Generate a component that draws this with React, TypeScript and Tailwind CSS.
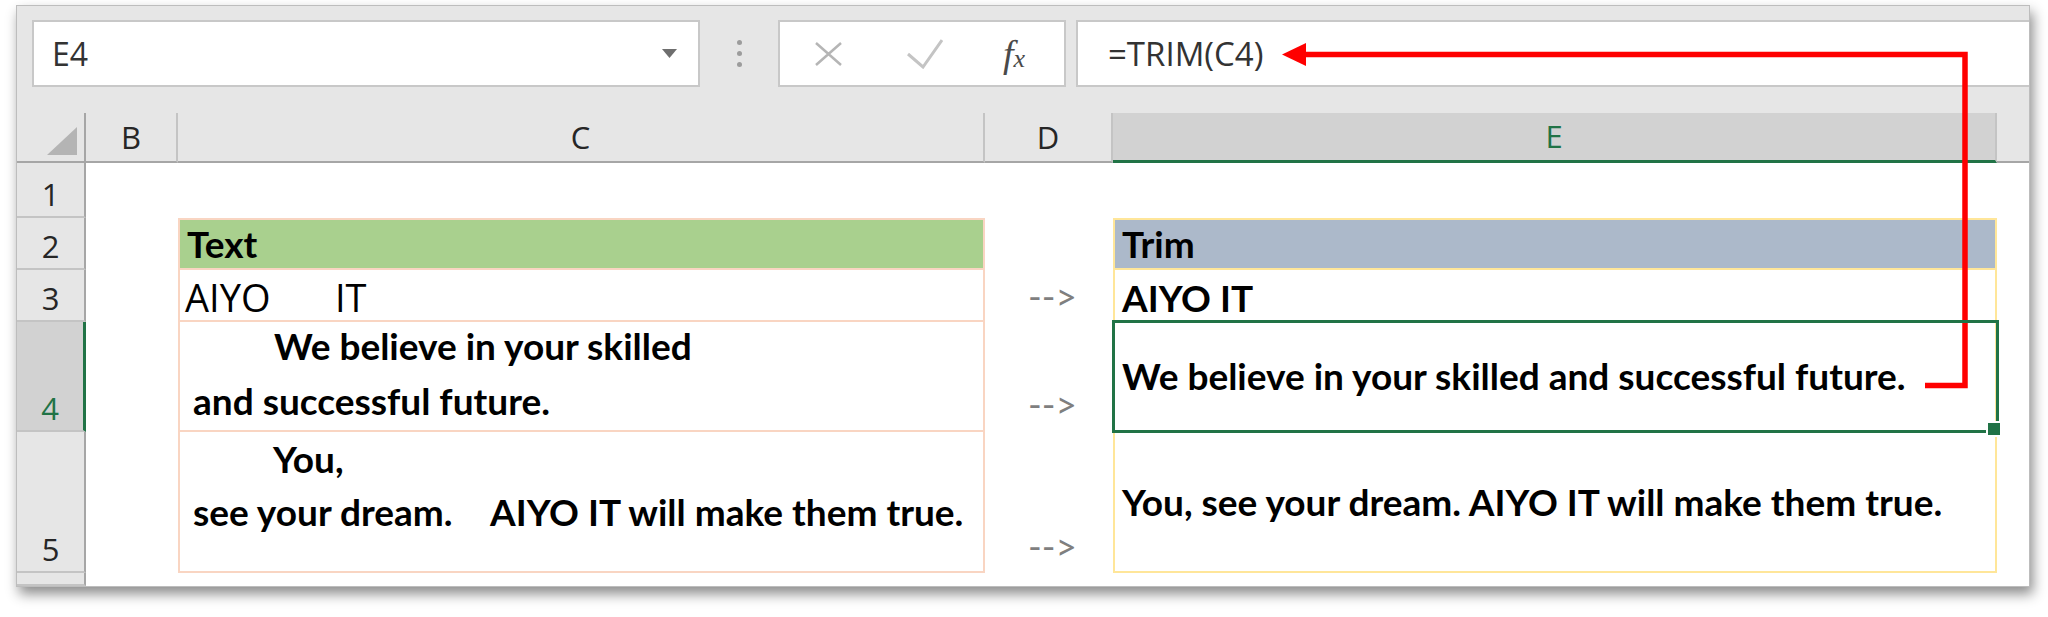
import React from "react";

// fonts
const ui = "font-['Open_Sans',sans-serif]";
const cell = "font-['Lato',sans-serif]";

const GREEN = "border-[#217346]";

function RowHead({ n, active = false }: { n?: string; active?: boolean }) {
  return (
    <div
      className={`flex items-end justify-center border-b-2 border-b-[#c4c4c4] pb-[6px] ${ui} text-[31px] leading-[31px] ${
        active
          ? "bg-[#d2d2d2] border-r-[3px] border-r-[#217346] text-[#217346]"
          : "bg-[#e6e6e6] border-r-2 border-r-[#a6a6a6] text-[#262626]"
      }`}
    >
      {n}
    </div>
  );
}

function ColHead({ label, active = false, last = false }: { label?: string; active?: boolean; last?: boolean }) {
  return (
    <div
      className={`flex items-center justify-center ${ui} text-[31px] leading-[31px] ${
        active
          ? "bg-[#d2d2d2] border-b-[3px] border-b-[#217346] text-[#217346] border-r-2 border-r-[#c4c4c4]"
          : `bg-[#e6e6e6] border-b-2 border-b-[#a6a6a6] text-[#262626] ${last ? "" : "border-r-2 border-r-[#c4c4c4]"}`
      }`}
    >
      {label}
    </div>
  );
}

function Arrow({ pb }: { pb: string }) {
  return (
    <div className={`flex items-end pl-[43px] ${pb} ${cell} text-[37px] leading-[44px] text-[#7f7f7f]`}>--&gt;</div>
  );
}

export default function App() {
  return (
    <div className="relative w-[2048px] h-[617px] bg-white overflow-hidden pl-[16px] pt-[5px]">
      {/* window */}
      <div className="w-[2014px] h-[582px] border border-[#bdbdbd] bg-[#e6e6e6] flex flex-col shadow-[3px_7px_12px_rgba(0,0,0,0.45)]">
        {/* formula bar */}
        <div className="h-[107px] shrink-0 flex items-start pt-[14px]">
          <div className={`ml-[15px] w-[668px] h-[67px] bg-white border-2 border-[#c8c8c8] flex items-center justify-between pl-[18px] pr-[21px] ${ui} text-[32px] text-[#333]`}>
            <span>E4</span>
            <svg width="15" height="9" viewBox="0 0 15 9">
              <path d="M0 0 L15 0 L7.5 9 Z" fill="#6e6e6e" />
            </svg>
          </div>
          <div className="w-[78px] h-[67px] flex flex-col items-center justify-center gap-[6px]">
            <span className="w-[5px] h-[5px] rounded-full bg-[#9c9c9c]" />
            <span className="w-[5px] h-[5px] rounded-full bg-[#9c9c9c]" />
            <span className="w-[5px] h-[5px] rounded-full bg-[#9c9c9c]" />
          </div>
          <div className="w-[288px] h-[67px] bg-white border-2 border-[#c8c8c8] flex items-center">
            <svg className="ml-[35px]" width="27" height="24" viewBox="0 0 27 24">
              <path d="M1 1 L26 23 M26 1 L1 23" stroke="#b5b5b5" strokeWidth="2.5" />
            </svg>
            <svg className="ml-[65px]" width="36" height="30" viewBox="0 0 36 30">
              <path d="M1 15 L16 28 L35 1" stroke="#c4c4c4" strokeWidth="3" fill="none" />
            </svg>
            <span className="ml-[60px] font-['Liberation_Serif',serif] italic text-[38px] leading-none text-[#4a4a4a]">
              f<span className="text-[26px]">x</span>
            </span>
          </div>
          <div className={`ml-[10px] flex-1 h-[67px] bg-white border-2 border-r-0 border-[#c8c8c8] flex items-center pl-[30px] ${ui} text-[33px] text-[#333]`}>
            =TRIM(C4)
          </div>
        </div>

        {/* sheet */}
        <div className="flex-1 grid grid-cols-[69px_92px_807px_128px_884px_1fr] grid-rows-[50px_55px_52px_52px_110px_141px_1fr] bg-white">
          {/* header row */}
          <div className="bg-[#e6e6e6] border-r-2 border-r-[#a6a6a6] border-b-2 border-b-[#a6a6a6] flex items-end justify-end pr-[7px] pb-[6px]">
            <svg width="30" height="28" viewBox="0 0 30 28">
              <path d="M30 0 L30 28 L0 28 Z" fill="#b4b4b4" />
            </svg>
          </div>
          <ColHead label="B" />
          <ColHead label="C" />
          <ColHead label="D" />
          <ColHead label="E" active />
          <ColHead last />

          {/* row 1 */}
          <RowHead n="1" />
          <div />
          <div />
          <div />
          <div />
          <div />

          {/* row 2 */}
          <RowHead n="2" />
          <div />
          <div className={`bg-[#a9d08e] border-2 border-[#f9d5c2] flex items-end pl-[7px] pb-[2px] ${cell} font-bold text-[37px] leading-[44px] text-black`}>
            Text
          </div>
          <div />
          <div className={`bg-[#acb9ca] border-2 border-[#ffe699] flex items-end pl-[7px] pb-[2px] ${cell} font-bold text-[37px] leading-[44px] text-black`}>
            Trim
          </div>
          <div />

          {/* row 3 */}
          <RowHead n="3" />
          <div />
          <div className={`border-2 border-t-0 border-[#f9d5c2] flex items-end pl-[5px] pb-[4px] ${ui} text-[38px] leading-[38px] text-black`}>
            <span className="inline-block w-[150px]">AIYO</span>
            <span>IT</span>
          </div>
          <Arrow pb="pb-[4px]" />
          <div className={`border-2 border-t-0 border-[#ffe699] flex items-end pl-[7px] ${cell} font-bold text-[37px] leading-[44px] text-black`}>
            AIYO IT
          </div>
          <div />

          {/* row 4 */}
          <RowHead n="4" active />
          <div />
          <div className={`border-2 border-t-0 border-[#f9d5c2] flex flex-col justify-end pb-[2px] ${cell} font-bold text-[37px] leading-[55px] text-black`}>
            <div className="pl-[94px]">We believe in your skilled</div>
            <div className="pl-[13px]">and successful future.</div>
          </div>
          <Arrow pb="pb-[6px]" />
          <div className={`relative border-2 border-t-0 border-[#ffe699] flex items-center pl-[7px] ${cell} font-bold text-[37px] leading-[44px] text-black`}>
            We believe in your skilled and successful future.
            <div className={`absolute left-[-3px] top-[-2px] right-[-4px] bottom-[-3px] border-[3px] ${GREEN} z-10`} />
            <div className="absolute right-[-7px] bottom-[-7px] w-[16px] h-[16px] bg-[#217346] border-2 border-white z-20" />
          </div>
          <div />

          {/* row 5 */}
          <RowHead n="5" />
          <div />
          <div className={`border-2 border-t-0 border-[#f9d5c2] flex flex-col ${cell} font-bold text-[37px] leading-[53px] text-black`}>
            <div className="pl-[93px]">You,</div>
            <div className="pl-[13px] flex">
              <span className="inline-block w-[297px]">see your dream.</span>
              <span>AIYO IT will make them true.</span>
            </div>
          </div>
          <Arrow pb="pb-[5px]" />
          <div className={`border-2 border-t-0 border-[#ffe699] flex items-center pl-[7px] ${cell} font-bold text-[37px] leading-[44px] text-black`}>
            You, see your dream. AIYO IT will make them true.
          </div>
          <div />

          {/* row 6 (cut off) */}
          <RowHead />
          <div />
          <div />
          <div />
          <div />
          <div />
        </div>
      </div>

      {/* red annotation arrow */}
      <svg className="absolute left-0 top-0 pointer-events-none" width="2048" height="617" viewBox="0 0 2048 617">
        <polyline points="1304,54.5 1965,54.5 1965,385.5 1925,385.5" fill="none" stroke="#ff0000" strokeWidth="5.5" strokeLinejoin="miter" />
        <polygon points="1282,54.5 1306,43 1306,66" fill="#ff0000" />
      </svg>
    </div>
  );
}
